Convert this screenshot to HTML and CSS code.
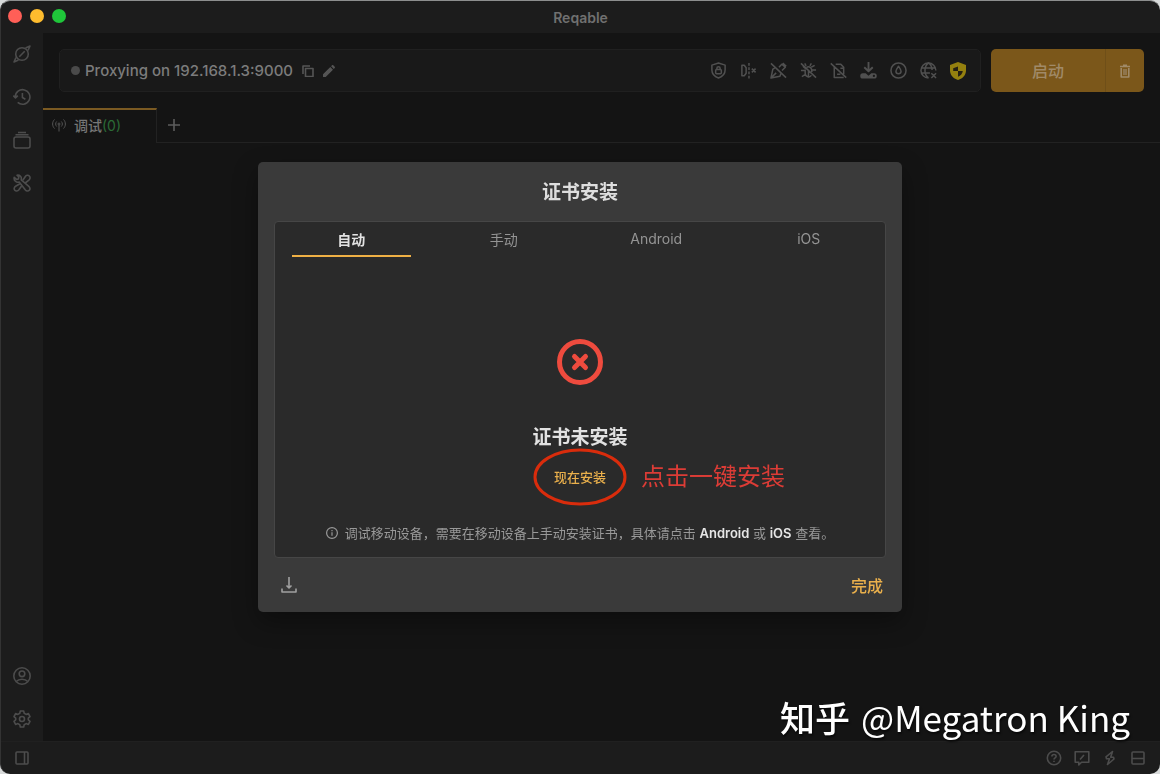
FILE: index.html
```html
<!DOCTYPE html>
<html lang="zh-CN">
<head>
    <meta charset="UTF-8">
    <meta name="viewport" content="width=device-width, initial-scale=1.0">
    <title>Reqable</title>
    <link rel="stylesheet" href="styles.css">
</head>
<body>
<div class="window">

    <!-- Title bar -->
    <header class="titlebar">
        <div class="lights">
            <button class="light red" aria-label="关闭"></button>
            <button class="light yellow" aria-label="最小化"></button>
            <button class="light green" aria-label="最大化"></button>
        </div>
        <span class="app-name">Reqable</span>
    </header>

    <div class="workspace">
        <!-- Sidebar -->
        <nav class="sidebar">
            <div class="nav-group">
                <button class="nav-btn" aria-label="调试">
                    <svg class="icon" viewBox="0 0 18 18"><circle cx="9" cy="9" r="6.300"/><path d="M12.500 3 17 1l-2 4.500M3 12.500 1 17l4.500-2M6.300 11.700l5.400-5.400"/></svg>
                </button>
                <button class="nav-btn" aria-label="历史">
                    <svg class="icon" viewBox="0 0 18 18"><path d="M2.300 9a7.300 7.300 0 1 1 2.400 5.400M.3 7.600l2.200 2.400 2.300-2.400M9.400 5v4.500l3 1.800"/></svg>
                </button>
                <button class="nav-btn" aria-label="集合">
                    <svg class="icon" viewBox="0 0 18 18"><rect x="1" y="6" width="16" height="11" rx="2"/><path d="M2.500 3.800h13M5 1.500h8"/></svg>
                </button>
                <button class="nav-btn" aria-label="工具箱">
                    <svg class="icon" viewBox="0 0 18 18"><path d="M6.200 8C3.300 9 .6 6.600 1.200 3.400l2.300 2 1.900-.5.400-1.900L4 1.200c2.900-.5 5 1.800 4.200 4.600l7.600 6.500c1.400 1.200 1.500 2.900.5 4s-2.800 1-3.900-.3z"/><path d="m9.800 6.300 2.400-3.600c1-1.500 2.900-1.900 4.100-.7s.9 3-.4 4.100L12.200 9M7 9.800l-4.400 2.500c-1.500.9-1.900 2.800-.8 4s3 .9 4.100-.5L8.600 12"/></svg>
                </button>
            </div>
            <div class="nav-group">
                <button class="nav-btn" aria-label="账号">
                    <svg class="icon" viewBox="0 0 18 18"><circle cx="9" cy="9" r="8.200"/><circle cx="9" cy="6.800" r="2.800"/><path d="M3.200 14.500c2.800-3 8.800-3 11.600 0"/></svg>
                </button>
                <button class="nav-btn" aria-label="设置">
                    <svg class="icon" viewBox="0 0 18 18"><path d="m7.300 1-.5 2.300-1.900 1.100-2.300-.8L1 6.700l1.700 1.500v1.600L1 11.300l1.600 3.100 2.300-.8 1.900 1.100.5 2.300h3.400l.5-2.300 1.900-1.100 2.300.8 1.600-3.100-1.700-1.500V8.200L17 6.700l-1.600-3.100-2.300.8-1.900-1.100-.5-2.300z"/><circle cx="9" cy="9" r="2.500"/></svg>
                </button>
            </div>
        </nav>

        <main class="content">
            <!-- Proxy toolbar -->
            <div class="toolbar">
                <div class="proxy-box">
                    <div class="proxy-info">
                        <span class="dot"></span>
                        <span class="proxy-text">Proxying on 192.168.1.3:9000</span>
                        <button class="mini-btn" aria-label="复制">
                            <svg class="icon" viewBox="0 0 12 12"><path d="M1 9V1h7"/><rect x="3.500" y="3.500" width="7.500" height="8"/></svg>
                        </button>
                        <button class="mini-btn" aria-label="编辑">
                            <svg class="icon solid" viewBox="0 0 12 12"><path d="M0 9.300 7.300 2l2.700 2.700L2.700 12H0zM8.100 1.200 9 .3c.4-.4.900-.4 1.300 0l1.400 1.400c.4.400.4.900 0 1.300l-.9.900z"/></svg>
                        </button>
                    </div>
                    <div class="tools">
                        <button class="tool-btn" aria-label="证书"><svg class="icon" viewBox="0 0 18 18"><path d="m9 1 7 2.300v5.200c0 4-2.500 6.900-7 8.500-4.500-1.600-7-4.500-7-8.500V3.300z"/><rect x="6" y="8" width="6" height="4.500" rx="1"/><path d="M7.300 8V6.700c0-2.200 3.400-2.200 3.400 0V8"/></svg></button>
                        <button class="tool-btn" aria-label="镜像"><svg class="icon" viewBox="0 0 18 18"><path d="M2 3.500h2.500L6.500 6v6l-2 2.500H2zM9.500 1v3M9.500 5.500v3M9.500 10v3M9.500 14.500v3M12.500 7l4 4M16.500 7l-4 4"/></svg></button>
                        <button class="tool-btn" aria-label="重写"><svg class="icon" viewBox="0 0 18 18"><path d="m1 1.500 16 15M5 6.500l-2 1L1 17l9.500-2 1-2.500M1 17l5.500-5.500M9.500 5.500l3-3.200 3.700 3.200-3.500 3.500M13.500 1.200l3.700 3.300"/></svg></button>
                        <button class="tool-btn" aria-label="断点"><svg class="icon" viewBox="0 0 18 18"><path d="m1 1.500 16 15M7 5.500c3-1.300 5.500.3 5.500 4v1M5.500 8v4c0 4 5 5 6.500 2M1 9h4M13 8.500h4M2 15.500l3.700-2.300M3 4.500 6 7M12 5.500l3.500-2M6.500 4 5 1.500M10.500 4 12 1.500M9 9.500v6"/></svg></button>
                        <button class="tool-btn" aria-label="脚本"><svg class="icon" viewBox="0 0 18 18"><path d="m.8 1.500 16.400 15M4.500 5v11.500h10M6 2.500h5.500l3 3V13M11 6.500h3.500M7.500 13H11"/></svg></button>
                        <button class="tool-btn" aria-label="下载"><svg class="icon thick" viewBox="0 0 18 18"><path d="M9 0v9.500M4.500 5.500 9 9.800l4.500-4.300"/><path class="tray" d="M3 12h3l3 2.500 3-2.500h3a2.700 2.700 0 0 1 0 5.500H3A2.700 2.700 0 0 1 3 12zm11.700 1.500a1.200 1.200 0 1 0 0 2.400 1.200 1.200 0 0 0 0-2.400z"/></svg></button>
                        <button class="tool-btn" aria-label="限速"><svg class="icon" viewBox="0 0 18 18"><circle cx="9" cy="9" r="8"/><path d="M9 4.500c1.600 2.300 2.700 3.700 2.700 5.300 0 3.600-5.400 3.600-5.400 0C6.300 8.200 7.400 6.800 9 4.500z"/></svg></button>
                        <button class="tool-btn" aria-label="网络"><svg class="icon" viewBox="0 0 18 18"><path d="M16.800 9A7.900 7.900 0 1 0 9 16.900M9 1C4 5 4 13 9 16.900M9 1c2.600 2 3.700 4.700 3.800 7.500M2 6.300h14M2 11.700h8.500M12 12l5 5M17 12l-5 5"/></svg></button>
                        <button class="tool-btn shield" aria-label="系统代理"><svg class="icon" viewBox="0 0 18 18"><path class="shield-body" d="M9 0 1 3v5.300c0 4.500 3 8.300 8 9.700 5-1.400 8-5.200 8-9.700V3z"/><path class="shield-cut" d="M9 4.500V9H4.200V6.200zM9 9h4.800c-.2 2.700-2.200 4.600-4.800 5.700z"/></svg></button>
                    </div>
                </div>
                <div class="start-group">
                    <button class="start-btn">启动</button>
                    <button class="clear-btn" aria-label="清空">
                        <svg class="icon" viewBox="0 0 12 14"><path d="M2.200 4v9h7.600V4M1 2.500h10M4 1.200h4"/><path class="bin" d="M4 5h4v6H4z"/></svg>
                    </button>
                </div>
            </div>

            <!-- Session tabs -->
            <div class="session-tabs">
                <button class="session-tab">
                    <svg class="icon" viewBox="0 0 14 14"><circle cx="7" cy="6" r="1"/><path d="M7 7v6.500M4.700 8.500c-1.400-1.400-1.400-3.600 0-5M9.300 8.500c1.400-1.400 1.400-3.600 0-5M2.500 10.500c-2.500-2.500-2.500-6.500 0-9M11.500 10.500c2.500-2.500 2.500-6.500 0-9"/></svg>
                    <span>调试<span class="count">(0)</span></span>
                </button>
                <button class="add-tab" aria-label="新建">
                    <svg class="icon" viewBox="0 0 12 12"><path d="M6 0v12M0 6h12"/></svg>
                </button>
            </div>
        </main>
    </div>

    <!-- Status bar -->
    <footer class="statusbar">
        <button class="status-btn" aria-label="侧栏"><svg class="icon" viewBox="0 0 16 16"><rect x="2" y="2" width="12" height="12" rx="1"/><path d="M10.500 2v12"/></svg></button>
        <div class="status-right">
            <button class="status-btn" aria-label="帮助"><svg class="icon" viewBox="0 0 16 16"><circle cx="8" cy="8" r="6.700"/><path d="M5.900 6.500c0-2.700 4.200-2.600 4.200-.1 0 1.500-2.100 1.500-2.100 3.100M8 10.800v1.200"/></svg></button>
            <button class="status-btn" aria-label="反馈"><svg class="icon" viewBox="0 0 16 16"><path d="M1.200 1.700h13.600v10.600H7.500L4.800 15v-2.700H1.200zM6 9.500l4-4.500"/></svg></button>
            <button class="status-btn" aria-label="快捷"><svg class="icon" viewBox="0 0 16 16"><path d="M10.500 1.500 4 6.800l.5 2h3L5.500 14.500 12 9l-.5-1.800H8.700z"/></svg></button>
            <button class="status-btn" aria-label="布局"><svg class="icon" viewBox="0 0 16 16"><rect x="2" y="2" width="12" height="12" rx="1"/><path d="M2 8.500h12"/></svg></button>
        </div>
    </footer>
</div>

<!-- Certificate dialog -->
<div class="overlay">
    <section class="dialog" role="dialog" aria-labelledby="dialogTitle">
        <h2 id="dialogTitle">证书安装</h2>
        <div class="panel">
            <div class="cert-tabs" role="tablist">
                <button class="cert-tab active" role="tab">自动</button>
                <button class="cert-tab" role="tab">手动</button>
                <button class="cert-tab" role="tab">Android</button>
                <button class="cert-tab" role="tab">iOS</button>
            </div>
            <div class="cert-body">
                <svg class="fail-icon" viewBox="0 0 48 48"><circle cx="24" cy="24" r="20.500"/><path d="m18.500 18.500 11 11M29.500 18.500l-11 11"/></svg>
                <h3>证书未安装</h3>
                <div class="install">
                    <button class="install-btn">现在安装</button>
                    <svg class="ring" viewBox="0 0 94 58"><ellipse cx="47" cy="29" rx="45" ry="27"/></svg>
                    <span class="hint">点击一键安装</span>
                </div>
                <p class="note">
                    <svg class="icon" viewBox="0 0 12 12"><circle cx="6" cy="6" r="5.400"/><path d="M6 5.300v3.500M6 3v1.200"/></svg>
                    <span>调试移动设备，需要在移动设备上手动安装证书，具体请点击 <a href="#android">Android</a> 或 <a href="#ios">iOS</a> 查看。</span>
                </p>
            </div>
        </div>
        <div class="dialog-footer">
            <button class="download-btn" aria-label="下载证书">
                <svg class="icon" viewBox="0 0 16 16"><path d="M8 0v11M5.500 8.500 8 11l2.500-2.500M1 11.500V15h14v-3.500"/></svg>
            </button>
            <button class="done-btn">完成</button>
        </div>
    </section>
</div>

<div class="watermark"><b>知乎</b><span>@Megatron King</span></div>

</body>
</html>
```
FILE: styles.css
```css
* {
    box-sizing: border-box;
}
body {
    margin: 0;
    background: #d8dada;
    color: #7c7c7c;
    font-family: Inter, "Noto Sans CJK SC", sans-serif;
    font-size: 14px;
}
button {
    display: flex;
    align-items: center;
    justify-content: center;
    margin: 0;
    padding: 0;
    border: none;
    background: none;
    color: inherit;
    font: inherit;
    cursor: pointer;
}
.icon {
    display: block;
    width: 18px;
    height: 18px;
    fill: none;
    stroke: currentColor;
    stroke-width: 1.6;
    stroke-linejoin: round;
}
.icon.solid {
    fill: currentColor;
    stroke: none;
}
.icon.thick {
    stroke-width: 2;
}

/* Window */
.window {
    display: flex;
    flex-direction: column;
    min-height: 100vh;
    border-top: 1px solid #8c8e8e;
    border-left: 1px solid #333;
    border-radius: 10px;
    background: #1c1c1c;
    overflow: hidden;
}
.titlebar {
    display: grid;
    grid-template-columns: 1fr auto 1fr;
    align-items: center;
    height: 32px;
}
.lights {
    display: flex;
    gap: 8px;
    padding: 0 0 2px 7px;
}
.light {
    width: 14px;
    height: 14px;
    border-radius: 50%;
}
.red {
    background: #ff5f57;
}
.yellow {
    background: #febc2e;
}
.green {
    background: #1fc63a;
}
.app-name {
    color: #707070;
    font-weight: 600;
}
.workspace {
    display: flex;
    flex: 1;
}

/* Sidebar */
.sidebar {
    display: flex;
    flex-direction: column;
    justify-content: space-between;
    width: 42px;
    color: #4c4c4c;
}
.nav-btn {
    width: 42px;
    height: 43px;
    padding-bottom: 1px;
}
.content {
    flex: 1;
    min-width: 0;
    background: #141414;
}

/* Toolbar */
.toolbar {
    display: flex;
    gap: 10px;
    padding: 16px;
}
.proxy-box {
    display: flex;
    flex: 1;
    align-items: center;
    justify-content: space-between;
    height: 43px;
    padding: 0 7px 0 11px;
    border: 1px solid #202020;
    border-radius: 5px;
    background: #191919;
}
.proxy-info {
    display: flex;
    align-items: center;
}
.dot {
    width: 9px;
    height: 9px;
    margin-right: 5px;
    border-radius: 50%;
    background: #4a4a4a;
}
.proxy-text {
    margin-right: 4px;
    font-size: 15px;
    font-weight: 500;
}
.mini-btn {
    width: 21px;
    height: 24px;
    color: #555;
}
.mini-btn .icon {
    width: 12px;
    height: 12px;
}
.tools {
    display: flex;
    color: #505050;
}
.tool-btn {
    width: 30px;
    height: 30px;
}
.tool-btn .icon {
    width: 17px;
    height: 17px;
}
.tray {
    fill: currentColor;
    fill-rule: evenodd;
    stroke: none;
}
.shield .icon {
    width: 18px;
    height: 18px;
    stroke: none;
}
.shield-body {
    fill: #94800f;
}
.shield-cut {
    fill: #252012;
}
.start-group {
    display: flex;
    border-radius: 5px;
    background: #7b571a;
    color: #a08a68;
    overflow: hidden;
}
.start-btn {
    width: 114px;
    padding-bottom: 2px;
    font-size: 16px;
    font-weight: 500;
}
.clear-btn {
    width: 39px;
    border-left: 1px solid #6f4f18;
}
.clear-btn .icon {
    width: 12px;
    height: 14px;
}
.bin {
    fill: #8f754c;
    stroke: none;
}

/* Session tabs */
.session-tabs {
    display: flex;
    height: 35px;
    color: #777;
}
.session-tabs::after {
    content: "";
    flex: 1;
    border-bottom: 1px solid #222;
}
.session-tab {
    gap: 8px;
    justify-content: flex-start;
    width: 114px;
    padding: 0 0 4px 9px;
    border-top: 2px solid #7b5a22;
    border-right: 1px solid #222;
    font-weight: 500;
}
.session-tab .icon {
    width: 14px;
    height: 14px;
    color: #555;
    stroke-width: 1;
}
.count {
    color: #2b6b36;
    font-weight: 400;
}
.add-tab {
    width: 34px;
    border-bottom: 1px solid #222;
}
.add-tab .icon {
    width: 12px;
    height: 12px;
    color: #5c5c5c;
}

/* Status bar */
.statusbar {
    display: flex;
    justify-content: space-between;
    height: 33px;
    padding: 0 8px 0 7px;
    border-top: 1px solid #202020;
    color: #4c4c4c;
}
.status-right {
    display: flex;
}
.status-btn {
    width: 28px;
    height: 32px;
}
.status-btn .icon {
    width: 16px;
    height: 16px;
}

/* Dialog */
.overlay {
    position: fixed;
    inset: 0;
    display: flex;
    align-items: center;
    justify-content: center;
}
.dialog {
    width: 644px;
    max-width: 94%;
    padding: 0 16px;
    border-radius: 5px;
    background: #3a3a3a;
    box-shadow: 0 10px 24px rgba(0, 0, 0, 0.35);
}
.dialog h2 {
    margin: 0;
    padding: 17px 0 14px;
    color: #dedede;
    font-size: 19px;
    font-weight: 600;
    line-height: 28px;
    text-align: center;
}
.panel {
    border: 1px solid #464646;
    border-radius: 4px;
    background: #2a2a2a;
}
.cert-tabs {
    display: grid;
    grid-template-columns: repeat(4, 1fr);
}
.cert-tab {
    height: 35px;
    margin: 0 17px;
    border-bottom: 2px solid transparent;
    color: #949494;
}
.cert-tab.active {
    border-color: #efb045;
    color: #e2e2e2;
    font-weight: 600;
}
.cert-body {
    display: flex;
    flex-direction: column;
    align-items: center;
    padding: 81px 16px 14px;
}
.fail-icon {
    width: 48px;
    height: 48px;
    fill: none;
    stroke: #ee4b3e;
    stroke-width: 5;
    stroke-linecap: round;
}
.cert-body h3 {
    margin: 38px 0 12px;
    color: #e2e2e2;
    font-size: 19px;
    font-weight: 600;
    line-height: 28px;
}
.install {
    position: relative;
}
.install-btn {
    height: 24px;
    color: #eab04c;
    font-size: 13px;
    font-weight: 500;
}
/* Marker drawn over the install button */
.ring {
    position: absolute;
    top: -16px;
    left: -21px;
    width: 94px;
    height: 58px;
    fill: none;
    stroke: #d92c0c;
    stroke-width: 3;
    pointer-events: none;
}
.hint {
    position: absolute;
    top: -5px;
    left: 87px;
    color: #dc3c36;
    font-size: 24px;
    line-height: 36px;
    white-space: nowrap;
}
.note {
    display: flex;
    gap: 7px;
    align-items: center;
    margin: 35px 0 0;
    color: #999;
    font-size: 13px;
    line-height: 20px;
}
.note .icon {
    width: 12px;
    height: 12px;
    stroke-width: 1.2;
}
.note a {
    color: #e6e6e6;
    font-weight: 600;
    text-decoration: none;
}
.dialog-footer {
    display: flex;
    align-items: center;
    justify-content: space-between;
    height: 54px;
    padding: 0 3px 0 7px;
}
.download-btn {
    color: #a0a0a0;
}
.download-btn .icon {
    width: 16px;
    height: 16px;
}
.done-btn {
    color: #eab04c;
    font-size: 16px;
    font-weight: 500;
}

/* Watermark */
.watermark {
    position: fixed;
    right: 30px;
    bottom: 31px;
    display: flex;
    gap: 11px;
    color: #fff;
    font-family: "Noto Sans CJK SC", sans-serif;
    font-size: 35px;
    line-height: 52px;
    text-shadow: 1px 2px 2px rgba(0, 0, 0, 0.6);
    pointer-events: none;
}
.watermark b {
    font-weight: 500;
}
```
